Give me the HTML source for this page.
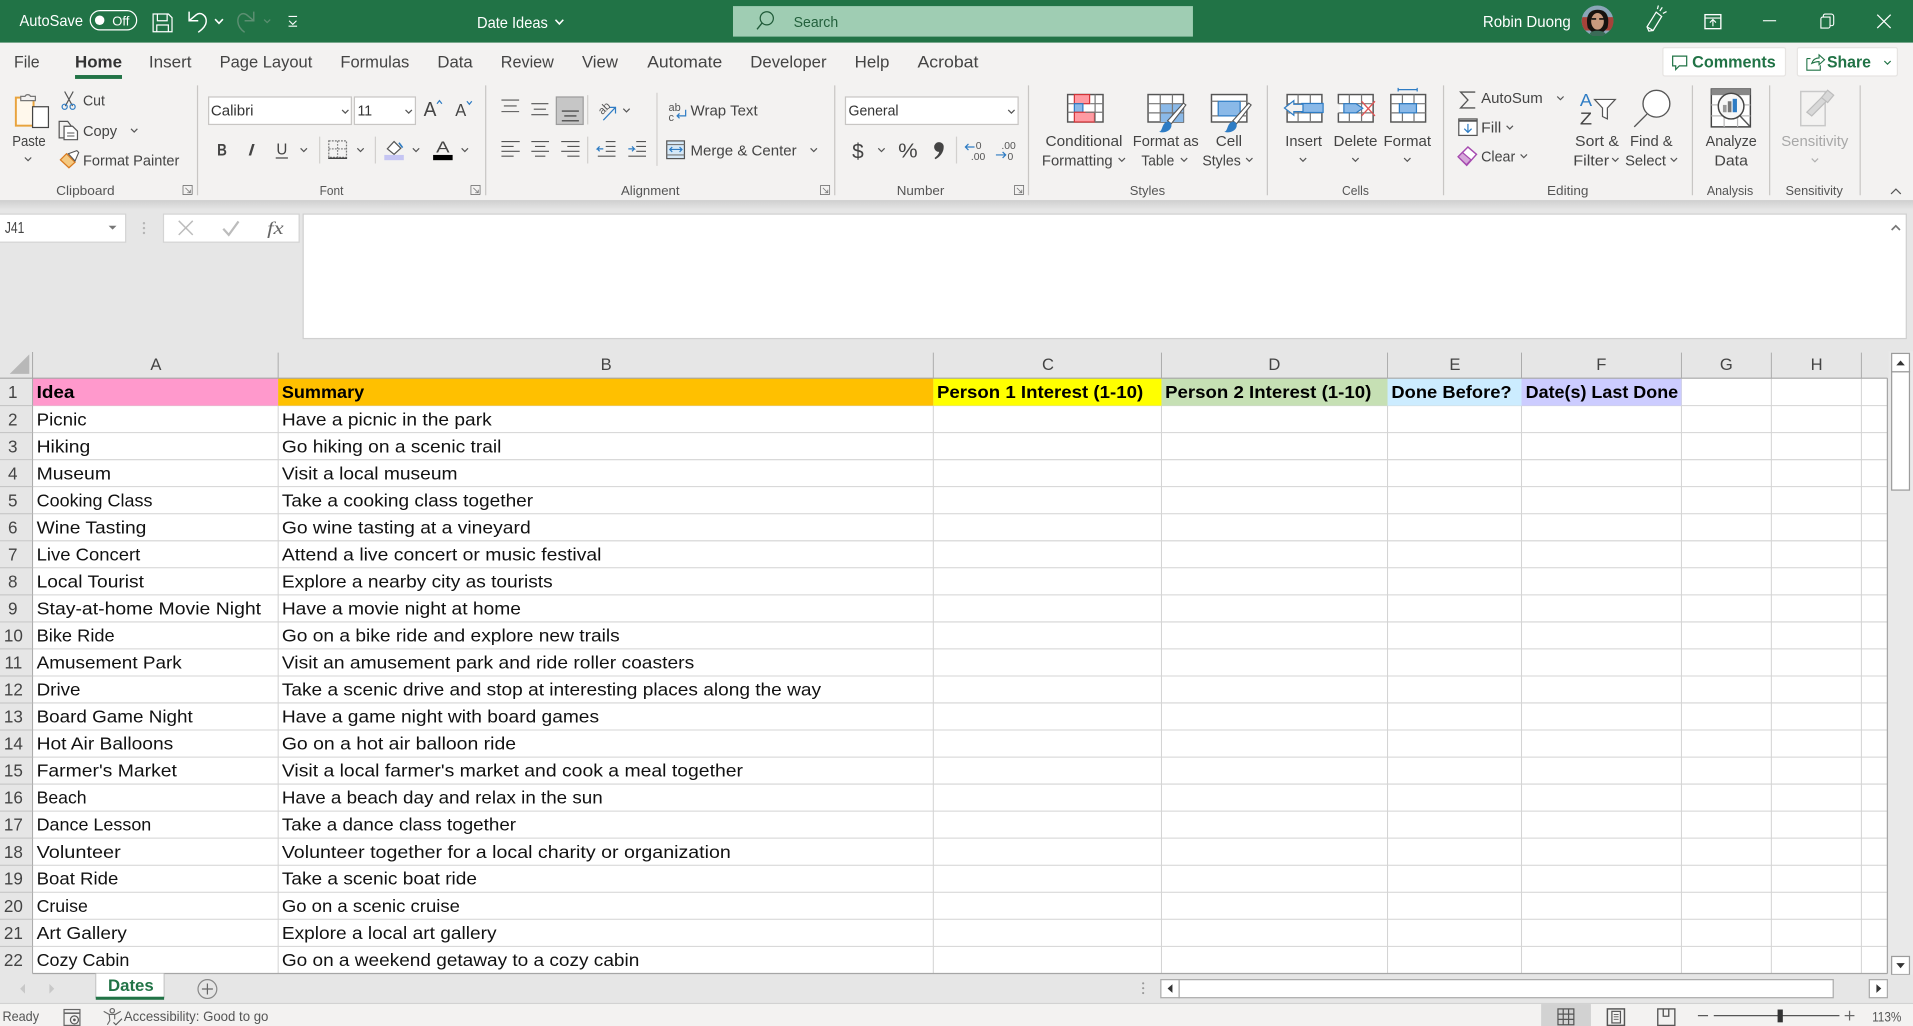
<!DOCTYPE html>
<html lang="en">
<head>
<meta charset="utf-8">
<title>Date Ideas - Excel</title>
<style>
html,body{margin:0;padding:0;background:#e6e6e6;overflow:hidden;width:1913px;height:1026px}
svg{display:block;font-family:"Liberation Sans",sans-serif}
.t{font-size:13.4px;fill:#444;transform:translateY(-.5px)}
.r{font-size:12.2px;fill:#444;transform:translateY(-.5px)}
.g{font-size:10.8px;fill:#555}
.w{font-size:12.6px;fill:#fff}
.c{font-size:14.75px;fill:#111;transform:translateY(-.6px)}
.b{font-size:14.75px;fill:#000;font-weight:700;transform:translateY(-.6px)}
.n{font-size:14px;fill:#444;text-anchor:middle;transform:translateY(-.6px)}
.l{font-size:13.6px;fill:#444;text-anchor:middle;transform:translateY(-.6px)}
.s{font-size:11.4px;fill:#555}
</style>
</head>
<body>
<svg xmlns="http://www.w3.org/2000/svg" width="1913" height="1026" viewBox="0 0 1568 841" preserveAspectRatio="none">
<defs>
<path id="ch" d="M-2.6-1.4L0 1.2L2.6-1.4" fill="none" stroke="#555" stroke-width="1"/>
<path id="chw" d="M-3.2-1.8L0 1.6L3.2-1.8" fill="none" stroke="#fff" stroke-width="1.3"/>
<linearGradient id="sh" x1="0" y1="0" x2="0" y2="1"><stop offset="0" stop-color="#cfcfcf"/><stop offset="1" stop-color="#e6e6e6"/></linearGradient>
<g id="brush"><path d="M2-2L15-16.500L17-15L5 .5Z" fill="#fff" stroke="#555" stroke-width="0.9"/><path d="M-5 7C-2 6.500-3 1 1-1C3-2 6 0 5 3C4 6.500-1 8.500-5 7Z" fill="#2e7cc4"/></g>
</defs>

<rect width="1568" height="841" fill="#e6e6e6"/>

<!-- title bar -->
<rect width="1568" height="35" fill="#217346"/>
<text class="w" x="16" y="21.500" textLength="52" lengthAdjust="spacingAndGlyphs">AutoSave</text>
<rect x="74" y="8.700" width="38" height="15.800" rx="7.900" fill="none" stroke="#fff" stroke-width="1"/>
<circle cx="81.700" cy="16.600" r="3.900" fill="#fff"/>
<text x="92" y="21" font-size="10.500" fill="#fff" textLength="14" lengthAdjust="spacingAndGlyphs">Off</text>
<path d="M125.500 11.500H138L141 14.500V26H125.500ZM129 11.500V17H137V11.500M128.500 26V20.500H138V26" fill="none" stroke="#fff" stroke-width="1"/>
<path d="M155 9.500V17H162.500M155.500 16.500L161 12C165 9.500 169.500 13 169 18C168.800 21 166 24 162.500 26.500" fill="none" stroke="#fff" stroke-width="1.200"/>
<use href="#chw" x="179.500" y="17.500"/>
<path d="M208 9.500V17H200.500M207.500 16.500L202 12C198 9.500 194.500 13 195 18C195.200 21 197 24 200.500 26.500" fill="none" stroke="#5c8f72" stroke-width="1.200"/>
<path d="M216.500 16l2.500 2.500L221.500 16" fill="none" stroke="#5c8f72"/>
<path d="M236.500 13.500h7M237 17l3 3l3-3M236.500 21.500h7" fill="none" stroke="#fff" stroke-width="0.900"/>
<text x="391" y="23" font-size="12.600" fill="#fff" textLength="58" lengthAdjust="spacingAndGlyphs">Date Ideas</text>
<use href="#chw" x="458.500" y="18"/>
<rect x="600.800" y="5" width="377" height="25" fill="#9fcdb3"/>
<circle cx="628.500" cy="15" r="5.400" fill="none" stroke="#1f5a38" stroke-width="1"/>
<path d="M624.500 19L620.500 24" stroke="#1f5a38" stroke-width="1.100"/>
<text x="650.500" y="22" font-size="12.400" fill="#23603c" textLength="36.500" lengthAdjust="spacingAndGlyphs">Search</text>
<text class="w" x="1215.500" y="22" textLength="72" lengthAdjust="spacingAndGlyphs">Robin Duong</text>
<!-- avatar -->
<ellipse cx="1309.400" cy="17" rx="13" ry="12.500" fill="#8ba6b8"/>
<path d="M1296.500 17c0 3 1 6 3 8h20c2-2 3-5 3-8c0-1-.2-2-.5-3h-25c-.3 1-.5 2-.5 3z" fill="#a5433a"/>
<path d="M1301.500 23c-1.500-6-1.500-15 8-15s9.500 9 8 15l-3 3h-10z" fill="#17120f"/>
<ellipse cx="1309.400" cy="17.500" rx="5.200" ry="6.800" fill="#c99a7e"/>
<path d="M1303 27.500c2-3 10-3 13 0l-2 2h-9z" fill="#3b6b58"/>
<path d="M1304.500 15.500h3.800M1310.800 15.500h3.800" stroke="#111" stroke-width="1.300"/>
<!-- pen -->
<path d="M1350 22l1.500 3.500l3.500-.5l7-11.500l-4.500-3.500zM1350 22l5 3M1360.500 9l2-3M1363 11l3-1.500M1358.500 7.500l.8-3" fill="none" stroke="#fff" stroke-width="1"/>
<rect x="1397.500" y="12" width="13" height="11.500" fill="none" stroke="#fff" stroke-width="1.100"/>
<path d="M1397.500 14.800h13M1404 21.500v-5M1401.500 18.500l2.500-2.500l2.500 2.500" fill="none" stroke="#fff" stroke-width="0.900"/>
<path d="M1445 17h10.800" stroke="#fff" stroke-width="0.900"/>
<path d="M1492.500 15.500a1.500 1.500 0 0 1 1.500-1.500h6v7.500a1.500 1.500 0 0 1-1.500 1.500h-6zM1494.500 14v-1a1.500 1.500 0 0 1 1.500-1.500h5a2 2 0 0 1 2 2v6a1.500 1.500 0 0 1-1.500 1.500h-1.500" fill="none" stroke="#fff" stroke-width="0.900"/>
<path d="M1538.700 12l11 11M1549.700 12l-11 11" stroke="#fff" stroke-width="1"/>

<!-- ribbon -->
<rect y="35" width="1568" height="129" fill="#f3f2f1"/>
<rect y="164" width="1568" height="8" fill="url(#sh)"/>
<text class="t" x="11.500" y="56" textLength="21" lengthAdjust="spacingAndGlyphs">File</text>
<text class="t" x="61.500" y="56" textLength="38.500" lengthAdjust="spacingAndGlyphs" style="font-weight:700;fill:#333">Home</text>
<rect x="61.500" y="61.500" width="38.500" height="3.200" fill="#217346"/>
<text class="t" x="122" y="56" textLength="35" lengthAdjust="spacingAndGlyphs">Insert</text>
<text class="t" x="180" y="56" textLength="76" lengthAdjust="spacingAndGlyphs">Page Layout</text>
<text class="t" x="279" y="56" textLength="56.500" lengthAdjust="spacingAndGlyphs">Formulas</text>
<text class="t" x="358.500" y="56" textLength="29" lengthAdjust="spacingAndGlyphs">Data</text>
<text class="t" x="410.500" y="56" textLength="43.500" lengthAdjust="spacingAndGlyphs">Review</text>
<text class="t" x="477" y="56" textLength="29.500" lengthAdjust="spacingAndGlyphs">View</text>
<text class="t" x="530.500" y="56" textLength="61.500" lengthAdjust="spacingAndGlyphs">Automate</text>
<text class="t" x="615" y="56" textLength="62.500" lengthAdjust="spacingAndGlyphs">Developer</text>
<text class="t" x="700.500" y="56" textLength="28.500" lengthAdjust="spacingAndGlyphs">Help</text>
<text class="t" x="752" y="56" textLength="50" lengthAdjust="spacingAndGlyphs">Acrobat</text>

<!-- comments / share -->
<rect x="1363" y="39" width="100.500" height="23.300" rx="1.500" fill="#fff" stroke="#e6e4e2"/>
<path d="M1371 46h11.500v8h-6l-3 3v-3h-2.500z" fill="none" stroke="#217346"/>
<text x="1387" y="55.500" font-size="13.400" font-weight="700" fill="#217346" textLength="68.500" lengthAdjust="spacingAndGlyphs">Comments</text>
<rect x="1473.200" y="39" width="82" height="23.300" rx="1.500" fill="#fff" stroke="#e6e4e2"/>
<path d="M1481 48h3M1481 48v9.500h11v-4M1485 52c1-3 3-4.500 6-4.500v-2.500l4.500 4l-4.500 4v-2.500c-2 0-4 .5-6 1.500z" fill="none" stroke="#217346" stroke-width="0.900"/>
<text x="1497.500" y="55.500" font-size="13.400" font-weight="700" fill="#217346" textLength="36" lengthAdjust="spacingAndGlyphs">Share</text>
<path d="M1544.500 50l2.600 2.600l2.600-2.600" fill="none" stroke="#217346"/>

<!-- separators -->
<path d="M161.900 70v90M398.100 70v90M684.200 70v90M843 70v90M1038.800 70v90M1183.200 70v90M1387.200 70v90M1450.500 70v90M1524.700 70v90" stroke="#c8c6c4"/>
<path d="M262 112v22M307.700 112v22M481.700 112v22M538.500 76v60M784 112v22M481.700 78v24" stroke="#d2d0ce"/>

<!-- group labels -->
<text class="g" x="46" y="160" textLength="48" lengthAdjust="spacingAndGlyphs">Clipboard</text>
<text class="g" x="262" y="160" textLength="19.500" lengthAdjust="spacingAndGlyphs">Font</text>
<text class="g" x="509" y="160" textLength="48" lengthAdjust="spacingAndGlyphs">Alignment</text>
<text class="g" x="735" y="160" textLength="39" lengthAdjust="spacingAndGlyphs">Number</text>
<text class="g" x="926" y="160" textLength="29" lengthAdjust="spacingAndGlyphs">Styles</text>
<text class="g" x="1100" y="160" textLength="22" lengthAdjust="spacingAndGlyphs">Cells</text>
<text class="g" x="1268" y="160" textLength="34" lengthAdjust="spacingAndGlyphs">Editing</text>
<text class="g" x="1399" y="160" textLength="38" lengthAdjust="spacingAndGlyphs">Analysis</text>
<text class="g" x="1463.500" y="160" textLength="47" lengthAdjust="spacingAndGlyphs">Sensitivity</text>
<path d="M150 152h7.500v7.500M150 152v7.500h7.500M152 154l4 4M156 155.500v2.500h-2.500" fill="none" stroke="#777" stroke-width="0.700"/>
<path d="M386 152h7.500v7.500M386 152v7.500h7.500M388 154l4 4M392 155.500v2.500h-2.500" fill="none" stroke="#777" stroke-width="0.700"/>
<path d="M672.500 152h7.500v7.500M672.500 152v7.500h7.500M674.500 154l4 4M678.500 155.500v2.500h-2.500" fill="none" stroke="#777" stroke-width="0.700"/>
<path d="M831.500 152h7.500v7.500M831.500 152v7.500h7.500M833.500 154l4 4M837.500 155.500v2.500h-2.500" fill="none" stroke="#777" stroke-width="0.700"/>
<path d="M1550 159l4-4l4 4" fill="none" stroke="#555" stroke-width="1"/>

<!-- clipboard -->
<rect x="13" y="80" width="14.500" height="23" fill="#fff8ec" stroke="#e8a33d" stroke-width="1.600"/>
<path d="M17 82.500v-3.500h3.500a2.500 2.500 0 0 1 4.500 0H29v3.500z" fill="#f3f2f1" stroke="#777" stroke-width="1"/>
<rect x="26.700" y="87.500" width="13" height="17" fill="#fff" stroke="#444" stroke-width="1"/>
<text class="r" x="10" y="120" textLength="27.500" lengthAdjust="spacingAndGlyphs">Paste</text>
<use href="#ch" x="23" y="130.500"/>
<path d="M53 75l6.500 12M60 75l-6.500 12" stroke="#555" fill="none"/>
<circle cx="53" cy="87.500" r="2.100" fill="none" stroke="#2e7cc4"/><circle cx="59.500" cy="87.500" r="2.100" fill="none" stroke="#2e7cc4"/>
<text class="r" x="68" y="87" textLength="18" lengthAdjust="spacingAndGlyphs">Cut</text>
<path d="M52 113h-3.500V99.500h7l3 4" fill="none" stroke="#555"/>
<path d="M52.500 103.500h7l4 4v7h-11z" fill="#fff" stroke="#555"/>
<path d="M55 109h6M55 111.500h6" stroke="#777"/>
<text class="r" x="68" y="112" textLength="28" lengthAdjust="spacingAndGlyphs">Copy</text>
<use href="#ch" x="110" y="107"/>
<path d="M49.500 131l5-5l7 7l-5 4.500z" fill="#f4c982" stroke="#d97a1f"/>
<path d="M56 126l7-2.500l1.500 1.500l-3 7z" fill="#fff" stroke="#555" stroke-width="0.900"/>
<text class="r" x="68" y="136" textLength="79" lengthAdjust="spacingAndGlyphs">Format Painter</text>

<!-- font -->
<rect x="171" y="79.500" width="117" height="22.500" fill="#fff" stroke="#c8c6c4"/>
<text class="r" x="172.800" y="95" textLength="35" lengthAdjust="spacingAndGlyphs" style="fill:#333">Calibri</text>
<use href="#ch" x="283" y="91.500"/>
<rect x="290.500" y="79.500" width="50" height="22.500" fill="#fff" stroke="#c8c6c4"/>
<text class="r" x="293" y="95" textLength="12" lengthAdjust="spacingAndGlyphs" style="fill:#333">11</text>
<use href="#ch" x="335" y="91.500"/>
<g transform="translate(1.200 0)">
<text x="346" y="95" font-size="16.500" fill="#444" textLength="10.500" lengthAdjust="spacingAndGlyphs">A</text>
<path d="M357 85l2-2.500l2 2.500" fill="none" stroke="#2e7cc4"/>
<text x="372" y="95" font-size="14" fill="#444" textLength="9" lengthAdjust="spacingAndGlyphs">A</text>
<path d="M381.500 83l2 2.500l2-2.500" fill="none" stroke="#2e7cc4"/>
</g>
<g transform="translate(1 0)">
<text x="177" y="127.500" font-size="13.500" font-weight="700" fill="#444" textLength="8" lengthAdjust="spacingAndGlyphs">B</text>
<text x="202" y="127.500" font-size="13.500" font-style="italic" fill="#444" textLength="6" lengthAdjust="spacingAndGlyphs">I</text>
<text x="225.500" y="126.500" font-size="13" fill="#444" textLength="9" lengthAdjust="spacingAndGlyphs">U</text>
<path d="M225 129.500h10" stroke="#444"/>
<use href="#ch" x="248" y="123"/>
<rect x="268.500" y="115.500" width="14.500" height="13.500" fill="none" stroke="#777" stroke-dasharray="1.500 1"/>
<path d="M275.700 115.500v13.500M268.500 122h14.500" stroke="#888" stroke-dasharray="1.500 1"/>
<path d="M268 129.700h15.500" stroke="#444" stroke-width="1.200"/>
<use href="#ch" x="294.500" y="123"/>
<path d="M316.500 122l5.500-6l5.500 5.500l-5.500 5z" fill="#fff" stroke="#555"/>
<path d="M326 117l3 4" stroke="#2e7cc4" stroke-width="1.300"/>
<rect x="314" y="127" width="16" height="4.300" fill="#c5c5f3"/>
<use href="#ch" x="340" y="123"/>
<text x="356.500" y="125" font-size="13" fill="#444" textLength="11" lengthAdjust="spacingAndGlyphs">A</text>
<rect x="354" y="127" width="16" height="4.300" fill="#000"/>
<use href="#ch" x="380" y="123"/>
</g>

<!-- alignment -->
<g transform="translate(1.500 0)">
<path d="M409.500 82h14.500M411.500 86.800h10.500M409.500 91.500h14.500" stroke="#555" stroke-width="0.900"/>
<path d="M434 85h14M436 89.500h10M434 94h14" stroke="#555" stroke-width="0.900"/>
<rect x="454.500" y="79.500" width="22" height="22.500" fill="#c6c6c6" stroke="#9c9c9c"/>
<path d="M459 91h14M461 95h10M459 99h14" stroke="#333" stroke-width="0.900"/>
<path d="M493 98.500l10-10.500M503 93v-5h-5" fill="none" stroke="#2e7cc4"/>
<text x="488" y="92" font-size="9" fill="#555" transform="rotate(-45 493 88)">ab</text>
<use href="#ch" x="512" y="90.500"/>
<path d="M409.500 116h15M409.500 120h10M409.500 124h15M409.500 128h10" stroke="#555" stroke-width="0.900"/>
<path d="M434 116h14.500M437 120h8.500M434 124h14.500M437 128h8.500" stroke="#555" stroke-width="0.900"/>
<path d="M458.500 116h15M463.500 120h10M458.500 124h15M463.500 128h10" stroke="#555" stroke-width="0.900"/>
<path d="M495 116h8M495 120h8M495 124h8M488.500 128h14.500" stroke="#555" stroke-width="0.900"/>
<path d="M493 122h-5l2-2m-2 2l2 2" stroke="#2e7cc4" fill="none"/>
<path d="M520 116h8M520 120h8M520 124h8M513.500 128h14.500" stroke="#555" stroke-width="0.900"/>
<path d="M513.500 122h5l-2-2m2 2l-2 2" stroke="#2e7cc4" fill="none"/>
</g>
<text x="548" y="91" font-size="9" fill="#555">ab</text>
<text x="548" y="99" font-size="9" fill="#555">c</text>
<path d="M562 90v5h-7m2-2l-2 2l2 2" fill="none" stroke="#2e7cc4"/>
<text class="r" x="566" y="95" textLength="55" lengthAdjust="spacingAndGlyphs">Wrap Text</text>
<rect x="546.500" y="115.500" width="14.500" height="14.500" fill="#d5e8f7" stroke="#555"/>
<path d="M549 122.500h10M551 120.500l-2 2l2 2M557 120.500l2 2l-2 2" fill="none" stroke="#2e7cc4"/>
<path d="M546.500 118.500h14.500M546.500 127h14.500" stroke="#777"/>
<text class="r" x="566" y="128" textLength="87" lengthAdjust="spacingAndGlyphs">Merge &amp; Center</text>
<use href="#ch" x="667" y="123"/>

<!-- number -->
<rect x="693" y="79.500" width="141.500" height="22.500" fill="#fff" stroke="#c8c6c4"/>
<text class="r" x="695.500" y="95" textLength="41" lengthAdjust="spacingAndGlyphs" style="fill:#333">General</text>
<use href="#ch" x="829" y="91.500"/>
<text x="698.500" y="130" font-size="17.500" fill="#444" textLength="9.500" lengthAdjust="spacingAndGlyphs">$</text>
<use href="#ch" x="722.500" y="123"/>
<text x="736.200" y="129" font-size="17" fill="#444" textLength="16" lengthAdjust="spacingAndGlyphs">%</text>
<path d="M769.500 116.500a3.800 3.800 0 0 1 4 4.200c0 4-3 8-6.800 9.800l-.7-1c2-1.500 3.500-3.200 3.800-5a3.800 3.800 0 0 1-.3-8z" fill="#444"/>
<g transform="translate(.8 0)">
<text x="799" y="122" font-size="8.500" fill="#555">0</text>
<text x="795" y="131" font-size="8.500" fill="#555">.00</text>
<path d="M798 120.500h-7.500m2.500-2.500l-2.500 2.500l2.500 2.500" fill="none" stroke="#2e7cc4"/>
<text x="820" y="122" font-size="8.500" fill="#555">.00</text>
<text x="825" y="131" font-size="8.500" fill="#555">0</text>
<path d="M815.500 127h8m-2.500-2.500l2.500 2.500l-2.500 2.500" fill="none" stroke="#2e7cc4"/>
</g>

<!-- styles -->
<g fill="none" transform="translate(.6 0)">
<rect x="874.500" y="77.500" width="29" height="22.500" fill="#fff" stroke="#555" stroke-width="1.200"/>
<rect x="880" y="77.500" width="12.500" height="7.500" fill="#ff9aa2" stroke="#d13438"/>
<rect x="880" y="85" width="7" height="7" fill="#8ab9e8" stroke="#2e7cc4"/>
<rect x="880" y="92" width="16.500" height="8" fill="#ff9aa2" stroke="#d13438"/>
<path d="M874.500 85h5M874.500 92h5M893 85h10.500M889 92h14.500M897 77.500v22.500" stroke="#777"/>
</g>
<g fill="none" transform="translate(1 0)">
<rect x="940" y="77.500" width="29" height="22.500" fill="#fff" stroke="#555" stroke-width="1.200"/>
<rect x="950" y="85" width="19" height="15" fill="#8ab9e8"/>
<path d="M940 85h29M940 92.500h29M950 77.500v22.500M960 77.500v22.500" stroke="#777"/>
</g>
<use href="#brush" x="955" y="101"/>
<g fill="none" transform="translate(1.500 0)">
<rect x="991.500" y="77.500" width="29" height="22.500" fill="#fff" stroke="#555" stroke-width="1.200"/>
<rect x="997" y="83" width="18" height="12" fill="#8ab9e8" stroke="#2e7cc4"/>
<path d="M991.500 83h5.500M991.500 95h5.500M1015 83h5.500M1015 95h5.500" stroke="#777"/>
</g>
<use href="#brush" x="1008.500" y="101"/>
<text class="r" x="857" y="120" textLength="63" lengthAdjust="spacingAndGlyphs">Conditional</text>
<text class="r" x="854" y="136" textLength="58" lengthAdjust="spacingAndGlyphs">Formatting</text>
<use href="#ch" x="919.500" y="131"/>
<text class="r" x="928.500" y="120" textLength="54" lengthAdjust="spacingAndGlyphs">Format as</text>
<text class="r" x="935.500" y="136" textLength="27" lengthAdjust="spacingAndGlyphs">Table</text>
<use href="#ch" x="970.500" y="131"/>
<text class="r" x="996.500" y="120" textLength="21.500" lengthAdjust="spacingAndGlyphs">Cell</text>
<text class="r" x="985.500" y="136" textLength="31.500" lengthAdjust="spacingAndGlyphs">Styles</text>
<use href="#ch" x="1024" y="131"/>

<!-- cells -->
<g>
<rect x="1055" y="77.500" width="28.500" height="22.500" fill="#fff" stroke="#555" stroke-width="1.200"/>
<path d="M1055 85h28.500M1055 92.500h28.500M1064 77.500v22.500M1074 77.500v22.500" stroke="#777"/>
<rect x="1067" y="84.800" width="17.500" height="7.400" fill="#8ab9e8" stroke="#2e7cc4"/>
<path d="M1052.800 88.500L1060.500 82.500V85.500H1068V91.500H1060.500V94.500Z" fill="#f3f2f1" stroke="#2e7cc4"/>
</g>
<g>
<rect x="1097" y="77.500" width="28.500" height="22.500" fill="#fff" stroke="#555" stroke-width="1.200"/>
<path d="M1097 85v7.500" stroke="#f3f2f1" stroke-width="2"/>
<path d="M1097 85h28M1097 92.500h28M1106 77.500v22.500M1116 77.500v22.500" stroke="#777"/>
<path d="M1101.500 85H1111.500L1117 88.700L1111.500 92.500H1101.500Z" fill="#8ab9e8" stroke="#2e7cc4"/>
<path d="M1116 83l11 12M1127 83l-11 12" stroke="#e05555" stroke-width="1.100"/>
</g>
<g>
<rect x="1140" y="77.500" width="28.500" height="22.500" fill="#fff" stroke="#555" stroke-width="1.200"/>
<path d="M1140 85h28.500M1140 92.500h28.500M1149.500 77.500v22.500M1159 77.500v22.500" stroke="#777"/>
<rect x="1147" y="85" width="14" height="7.500" fill="#8ab9e8" stroke="#2e7cc4"/>
<path d="M1146 73.500h15.600M1146 72v3M1161.600 72v3" stroke="#2e7cc4" fill="none"/>
</g>
<text class="r" x="1053.500" y="120" textLength="30" lengthAdjust="spacingAndGlyphs">Insert</text>
<use href="#ch" x="1068" y="131"/>
<text class="r" x="1093" y="120" textLength="36" lengthAdjust="spacingAndGlyphs">Delete</text>
<use href="#ch" x="1111" y="131"/>
<text class="r" x="1134" y="120" textLength="39" lengthAdjust="spacingAndGlyphs">Format</text>
<use href="#ch" x="1153.500" y="131"/>

<!-- editing -->
<g transform="translate(.7 0)">
<path d="M1208.500 75.500h-12l6 6.500l-6 6.500h12" fill="none" stroke="#555" stroke-width="1.100"/>
<rect x="1195" y="97.500" width="15" height="13.500" fill="#fff" stroke="#555"/>
<path d="M1195 99h15" stroke="#555" stroke-width="1.500"/>
<path d="M1202.500 101.500v7m-3-3l3 3l3-3" fill="none" stroke="#2e7cc4"/>
<path d="M1194.500 128.500l8-8l7 6l-8 9z" fill="#fff" stroke="#a64bb0" stroke-width="1.200"/>
<path d="M1198 125l7 6l-3.700 4l-6.800-6.500z" fill="#d6a8da" stroke="#a64bb0"/>
</g>
<text class="r" x="1214" y="85" textLength="50.500" lengthAdjust="spacingAndGlyphs">AutoSum</text>
<use href="#ch" x="1279" y="80.500"/>
<text class="r" x="1214" y="109" textLength="16.500" lengthAdjust="spacingAndGlyphs">Fill</text>
<use href="#ch" x="1237.500" y="104.500"/>
<text class="r" x="1214" y="133" textLength="28" lengthAdjust="spacingAndGlyphs">Clear</text>
<use href="#ch" x="1249" y="128"/>
<g transform="translate(1 0)">
<text x="1294" y="87" font-size="14" fill="#2e7cc4" textLength="10" lengthAdjust="spacingAndGlyphs">A</text>
<text x="1294" y="102" font-size="14" fill="#444" textLength="10" lengthAdjust="spacingAndGlyphs">Z</text>
<path d="M1306 81.500h17l-6.500 7v9l-4-2v-7z" fill="#fff" stroke="#555"/>
<circle cx="1356.700" cy="85" r="11" fill="#fff" stroke="#555" stroke-width="1.100"/>
<path d="M1349 93.500L1338.500 104" stroke="#555" stroke-width="1.100"/>
</g>
<text class="r" x="1291" y="120" textLength="36" lengthAdjust="spacingAndGlyphs">Sort &amp;</text>
<text class="r" x="1289.500" y="136" textLength="29.500" lengthAdjust="spacingAndGlyphs">Filter</text>
<use href="#ch" x="1324" y="131"/>
<text class="r" x="1336" y="120" textLength="35" lengthAdjust="spacingAndGlyphs">Find &amp;</text>
<text class="r" x="1332" y="136" textLength="33.500" lengthAdjust="spacingAndGlyphs">Select</text>
<use href="#ch" x="1372" y="131"/>

<!-- analyze -->
<g transform="translate(1.200 0)">
<rect x="1401.500" y="73" width="32" height="31" fill="#fff" stroke="#444" stroke-width="1.200"/>
<rect x="1401.500" y="73" width="32" height="5" fill="#888"/>
<path d="M1401.500 86h32M1401.500 95h32M1412 78v26M1423 78v26" stroke="#bbb"/>
<circle cx="1417.700" cy="87" r="10.500" fill="#f7f7f7" stroke="#444" stroke-width="1.200"/>
<path d="M1425 95l8.500 9" stroke="#555" stroke-width="1.200"/>
<rect x="1411" y="86" width="3" height="6" fill="#999"/><rect x="1415" y="83" width="3" height="9" fill="#777"/><rect x="1419" y="81" width="3.500" height="11" fill="#2e7cc4"/>
</g>
<text class="r" x="1398" y="120" textLength="42" lengthAdjust="spacingAndGlyphs">Analyze</text>
<text class="r" x="1405.200" y="136" textLength="27.500" lengthAdjust="spacingAndGlyphs">Data</text>

<!-- sensitivity -->
<g transform="translate(1 0)">
<rect x="1475" y="75" width="20" height="28" fill="#f3f2f1" stroke="#c8c8c8" stroke-width="1.200"/>
<path d="M1480 92l13-13l4 3l-13 13z" fill="#d8d8d8" stroke="#bdbdbd"/>
<path d="M1492 80l5-6l5 4l-5 6z" fill="#d8d8d8" stroke="#bdbdbd"/>
</g>
<text class="r" x="1460" y="120" textLength="55" lengthAdjust="spacingAndGlyphs" style="fill:#a8a8a8">Sensitivity</text>
<path d="M1485 130l2.600 2.600l2.600-2.600" fill="none" stroke="#b0b0b0"/>

<!-- formula bar -->
<rect x="-1" y="175.500" width="104" height="23" fill="#fff" stroke="#d4d4d4"/>
<text x="4" y="191" textLength="16" lengthAdjust="spacingAndGlyphs" style="fill:#444;font-size:12.800px">J41</text>
<path d="M89 185h6.500l-3.200 3.200z" fill="#777"/>
<circle cx="118" cy="183" r="1" fill="#b5b5b5"/><circle cx="118" cy="187" r="1" fill="#b5b5b5"/><circle cx="118" cy="191" r="1" fill="#b5b5b5"/>
<rect x="134" y="175.500" width="111.200" height="23" fill="#fff" stroke="#d4d4d4"/>
<path d="M146.500 181l11.500 11.500M158 181l-11.500 11.500" stroke="#bcbcbc" stroke-width="1.200"/>
<path d="M183 187.500l4.500 5l8-11" fill="none" stroke="#bcbcbc" stroke-width="1.800"/>
<text x="219" y="192" font-family="Liberation Serif,serif" font-style="italic" font-size="15" fill="#666" textLength="13.500" lengthAdjust="spacingAndGlyphs">fx</text>
<rect x="248.500" y="175.500" width="1314" height="102" fill="#fff" stroke="#d0d0d0"/>
<path d="M1550.500 188.500l3.400-3.400l3.400 3.400" fill="none" stroke="#777" stroke-width="1.400"/>

<!-- grid body -->
<rect x="26.700" y="310" width="1520.300" height="488" fill="#fff"/>
<path d="M8 306.500L24 290.500V306.500Z" fill="#b8b8b8"/>
<g stroke="#d4d4d4" stroke-width="0.850">
<path d="M26.700 354.600H1547M26.700 376.800H1547M26.700 398.900H1547M26.700 421.100H1547M26.700 443.300H1547M26.700 465.400H1547M26.700 487.600H1547M26.700 509.800H1547M26.700 531.900H1547M26.700 554.100H1547M26.700 576.200H1547M26.700 598.400H1547M26.700 620.600H1547M26.700 642.700H1547M26.700 664.900H1547M26.700 687H1547M26.700 709.200H1547M26.700 731.400H1547M26.700 753.500H1547M26.700 775.700H1547M26.700 332.500H1547"/>
<path d="M228 310V798M765 310V798M952 310V798M1137.300 310V798M1247.100 310V798M1378.200 310V798M1451.900 310V798M1525.700 310V798"/>
</g>
<rect x="26.700" y="310" width="201.300" height="22.500" fill="#ff99cc"/>
<rect x="228" y="310" width="537" height="22.500" fill="#ffc000"/>
<rect x="765" y="310" width="187" height="22.500" fill="#ffff00"/>
<rect x="952" y="310" width="185.300" height="22.500" fill="#c6e0b4"/>
<rect x="1137.300" y="310" width="109.800" height="22.500" fill="#ccecff"/>
<rect x="1247.100" y="310" width="131.100" height="22.500" fill="#ccccff"/>
<path d="M0 310H1547M1547 310V798M26.700 798H1547" stroke="#a6a6a6" stroke-width="1" fill="none"/>
<path d="M26.700 288.500V798" stroke="#a6a6a6" stroke-width="0.800"/>
<path d="M228 289V310M765 289V310M952 289V310M1137.300 289V310M1247.100 289V310M1378.200 289V310M1451.900 289V310M1525.700 289V310" stroke="#ababab" stroke-width="0.800"/>
<g stroke="#c2c2c2" stroke-width="0.800"><path d="M0 332.500H26.700M0 354.600H26.700M0 376.800H26.700M0 398.900H26.700M0 421.100H26.700M0 443.300H26.700M0 465.400H26.700M0 487.600H26.700M0 509.800H26.700M0 531.900H26.700M0 554.100H26.700M0 576.200H26.700M0 598.400H26.700M0 620.600H26.700M0 642.700H26.700M0 664.900H26.700M0 687H26.700M0 709.200H26.700M0 731.400H26.700M0 753.500H26.700M0 775.700H26.700"/></g>

<!-- column letters -->
<text class="l" x="127.800" y="304">A</text><text class="l" x="496.800" y="304">B</text><text class="l" x="859" y="304">C</text><text class="l" x="1044.500" y="304">D</text><text class="l" x="1192.500" y="304">E</text><text class="l" x="1312.500" y="304">F</text><text class="l" x="1415" y="304">G</text><text class="l" x="1489" y="304">H</text>

<!-- row numbers -->
<text class="n" x="10.500" y="327">1</text><text class="n" x="10.500" y="349.200">2</text><text class="n" x="10.500" y="371.400">3</text><text class="n" x="10.500" y="393.500">4</text><text class="n" x="10.500" y="415.700">5</text><text class="n" x="10.500" y="437.800">6</text><text class="n" x="10.500" y="460">7</text><text class="n" x="10.500" y="482.100">8</text><text class="n" x="10.500" y="504.300">9</text><text class="n" x="11" y="526.500">10</text><text class="n" x="11" y="548.600">11</text><text class="n" x="11" y="570.800">12</text><text class="n" x="11" y="592.900">13</text><text class="n" x="11" y="615.100">14</text><text class="n" x="11" y="637.200">15</text><text class="n" x="11" y="659.400">16</text><text class="n" x="11" y="681.500">17</text><text class="n" x="11" y="703.700">18</text><text class="n" x="11" y="725.800">19</text><text class="n" x="11" y="748">20</text><text class="n" x="11" y="770.200">21</text><text class="n" x="11" y="792.300">22</text>

<!-- header row -->
<text class="b" x="30" y="327" textLength="31" lengthAdjust="spacingAndGlyphs">Idea</text>
<text class="b" x="231" y="327" textLength="67.500" lengthAdjust="spacingAndGlyphs">Summary</text>
<text class="b" x="768" y="327" textLength="169" lengthAdjust="spacingAndGlyphs">Person 1 Interest (1-10)</text>
<text class="b" x="955" y="327" textLength="169" lengthAdjust="spacingAndGlyphs">Person 2 Interest (1-10)</text>
<text class="b" x="1140.500" y="327" textLength="98.500" lengthAdjust="spacingAndGlyphs">Done Before?</text>
<text class="b" x="1250.500" y="327" textLength="125" lengthAdjust="spacingAndGlyphs">Date(s) Last Done</text>

<!-- column A -->
<text class="c" x="30" y="349.200" textLength="41" lengthAdjust="spacingAndGlyphs">Picnic</text>
<text class="c" x="30" y="371.400" textLength="44" lengthAdjust="spacingAndGlyphs">Hiking</text>
<text class="c" x="30" y="393.500" textLength="61" lengthAdjust="spacingAndGlyphs">Museum</text>
<text class="c" x="30" y="415.700" textLength="95" lengthAdjust="spacingAndGlyphs">Cooking Class</text>
<text class="c" x="30" y="437.800" textLength="90" lengthAdjust="spacingAndGlyphs">Wine Tasting</text>
<text class="c" x="30" y="460" textLength="85" lengthAdjust="spacingAndGlyphs">Live Concert</text>
<text class="c" x="30" y="482.100" textLength="88" lengthAdjust="spacingAndGlyphs">Local Tourist</text>
<text class="c" x="30" y="504.300" textLength="184" lengthAdjust="spacingAndGlyphs">Stay-at-home Movie Night</text>
<text class="c" x="30" y="526.500" textLength="64" lengthAdjust="spacingAndGlyphs">Bike Ride</text>
<text class="c" x="30" y="548.600" textLength="119" lengthAdjust="spacingAndGlyphs">Amusement Park</text>
<text class="c" x="30" y="570.800" textLength="36" lengthAdjust="spacingAndGlyphs">Drive</text>
<text class="c" x="30" y="592.900" textLength="128" lengthAdjust="spacingAndGlyphs">Board Game Night</text>
<text class="c" x="30" y="615.100" textLength="112" lengthAdjust="spacingAndGlyphs">Hot Air Balloons</text>
<text class="c" x="30" y="637.200" textLength="115" lengthAdjust="spacingAndGlyphs">Farmer's Market</text>
<text class="c" x="30" y="659.400" textLength="41" lengthAdjust="spacingAndGlyphs">Beach</text>
<text class="c" x="30" y="681.500" textLength="94" lengthAdjust="spacingAndGlyphs">Dance Lesson</text>
<text class="c" x="30" y="703.700" textLength="69" lengthAdjust="spacingAndGlyphs">Volunteer</text>
<text class="c" x="30" y="725.800" textLength="67" lengthAdjust="spacingAndGlyphs">Boat Ride</text>
<text class="c" x="30" y="748" textLength="42" lengthAdjust="spacingAndGlyphs">Cruise</text>
<text class="c" x="30" y="770.200" textLength="74" lengthAdjust="spacingAndGlyphs">Art Gallery</text>
<text class="c" x="30" y="792.300" textLength="76" lengthAdjust="spacingAndGlyphs">Cozy Cabin</text>

<!-- column B -->
<text class="c" x="231" y="349.200" textLength="172" lengthAdjust="spacingAndGlyphs">Have a picnic in the park</text>
<text class="c" x="231" y="371.400" textLength="180" lengthAdjust="spacingAndGlyphs">Go hiking on a scenic trail</text>
<text class="c" x="231" y="393.500" textLength="144" lengthAdjust="spacingAndGlyphs">Visit a local museum</text>
<text class="c" x="231" y="415.700" textLength="206" lengthAdjust="spacingAndGlyphs">Take a cooking class together</text>
<text class="c" x="231" y="437.800" textLength="204" lengthAdjust="spacingAndGlyphs">Go wine tasting at a vineyard</text>
<text class="c" x="231" y="460" textLength="262" lengthAdjust="spacingAndGlyphs">Attend a live concert or music festival</text>
<text class="c" x="231" y="482.100" textLength="222" lengthAdjust="spacingAndGlyphs">Explore a nearby city as tourists</text>
<text class="c" x="231" y="504.300" textLength="196" lengthAdjust="spacingAndGlyphs">Have a movie night at home</text>
<text class="c" x="231" y="526.500" textLength="277" lengthAdjust="spacingAndGlyphs">Go on a bike ride and explore new trails</text>
<text class="c" x="231" y="548.600" textLength="338" lengthAdjust="spacingAndGlyphs">Visit an amusement park and ride roller coasters</text>
<text class="c" x="231" y="570.800" textLength="442" lengthAdjust="spacingAndGlyphs">Take a scenic drive and stop at interesting places along the way</text>
<text class="c" x="231" y="592.900" textLength="260" lengthAdjust="spacingAndGlyphs">Have a game night with board games</text>
<text class="c" x="231" y="615.100" textLength="192" lengthAdjust="spacingAndGlyphs">Go on a hot air balloon ride</text>
<text class="c" x="231" y="637.200" textLength="378" lengthAdjust="spacingAndGlyphs">Visit a local farmer's market and cook a meal together</text>
<text class="c" x="231" y="659.400" textLength="263" lengthAdjust="spacingAndGlyphs">Have a beach day and relax in the sun</text>
<text class="c" x="231" y="681.500" textLength="192" lengthAdjust="spacingAndGlyphs">Take a dance class together</text>
<text class="c" x="231" y="703.700" textLength="368" lengthAdjust="spacingAndGlyphs">Volunteer together for a local charity or organization</text>
<text class="c" x="231" y="725.800" textLength="160" lengthAdjust="spacingAndGlyphs">Take a scenic boat ride</text>
<text class="c" x="231" y="748" textLength="146" lengthAdjust="spacingAndGlyphs">Go on a scenic cruise</text>
<text class="c" x="231" y="770.200" textLength="176" lengthAdjust="spacingAndGlyphs">Explore a local art gallery</text>
<text class="c" x="231" y="792.300" textLength="293" lengthAdjust="spacingAndGlyphs">Go on a weekend getaway to a cozy cabin</text>

<!-- vertical scrollbar -->
<rect x="1548" y="288" width="20" height="512" fill="#e9e9e9"/>
<rect x="1550.500" y="304.700" width="14.600" height="97" fill="#fff" stroke="#9c9c9c"/>
<rect x="1550.500" y="289.700" width="14.600" height="15" fill="#fff" stroke="#9c9c9c"/>
<path d="M1554.300 299.500h7l-3.500-4z" fill="#333"/>
<rect x="1550.500" y="784" width="14.600" height="14.800" fill="#fff" stroke="#9c9c9c"/>
<path d="M1554.300 789.500h7l-3.500 4.200z" fill="#333"/>

<!-- sheet tabs -->
<rect y="799" width="1568" height="23.500" fill="#e6e6e6"/>
<path d="M0 822.500H1568" stroke="#d2d2d2"/>
<path d="M20.500 806.500l-4 4l4 4z" fill="#c8c8c8"/><path d="M40.500 806.500l4 4l-4 4z" fill="#c8c8c8"/>
<rect x="78.500" y="798" width="56" height="20" fill="#fff"/>
<path d="M78.500 798v20M134.500 798v20" stroke="#c0c0c0" stroke-width="0.800"/>
<rect x="78.500" y="817" width="56" height="2.500" fill="#217346"/>
<text x="88.500" y="812.500" font-size="13.500" font-weight="700" fill="#217346" textLength="37.500" lengthAdjust="spacingAndGlyphs">Dates</text>
<circle cx="170" cy="810.700" r="7.700" fill="none" stroke="#888"/>
<path d="M165.500 810.700h9M170 806.200v9" stroke="#666"/>
<circle cx="937" cy="806" r="0.900" fill="#999"/><circle cx="937" cy="810" r="0.900" fill="#999"/><circle cx="937" cy="814" r="0.900" fill="#999"/>
<rect x="951.500" y="803" width="15" height="14.800" fill="#fff" stroke="#ababab"/>
<path d="M961 806.800v7l-4-3.500z" fill="#333"/>
<rect x="966.500" y="803" width="536.100" height="14.800" fill="#fff" stroke="#ababab"/>
<rect x="1532.200" y="803" width="14.800" height="14.800" fill="#fff" stroke="#ababab"/>
<path d="M1538 806.800v7l4-3.500z" fill="#333"/>

<!-- status bar -->
<rect y="823" width="1568" height="18" fill="#f3f2f1"/>
<text class="s" x="2" y="837" textLength="30" lengthAdjust="spacingAndGlyphs">Ready</text>
<rect x="52.500" y="827.500" width="13" height="13" fill="none" stroke="#666"/>
<path d="M52.500 830.500h13" stroke="#666" stroke-width="1.300"/>
<circle cx="61" cy="836" r="3.300" fill="#f3f2f1" stroke="#555"/><circle cx="61" cy="836" r="1.100" fill="#555"/>
<circle cx="92" cy="828.500" r="1.800" fill="none" stroke="#666"/>
<path d="M85 829l4.500 2.500h5l4.500-2.500M89.500 831.500l.5 5l-2 3.500M94 831.500v4" fill="none" stroke="#666" stroke-width="0.900"/>
<path d="M93 838l2 2l5-5" fill="none" stroke="#555" stroke-width="0.900"/>
<text class="s" x="101.500" y="837" textLength="118.500" lengthAdjust="spacingAndGlyphs">Accessibility: Good to go</text>
<rect x="1263.200" y="823" width="40.800" height="18" fill="#d2d2d2"/>
<g fill="none" stroke="#555" stroke-width="1"><rect x="1277" y="827" width="13" height="13"/><path d="M1277 831.300h13M1277 835.600h13M1281.300 827v13M1285.700 827v13"/></g>
<g fill="none" stroke="#555" stroke-width="1"><rect x="1317.500" y="827" width="14" height="13.500" stroke-width="1.200"/><rect x="1321.200" y="829" width="7" height="9.500"/><path d="M1322.700 831.500h4M1322.700 833.500h4M1322.700 835.500h4" stroke-width="0.700"/></g>
<g fill="none" stroke="#555" stroke-width="1.100"><rect x="1358.800" y="827" width="14" height="13.500"/><path d="M1363.300 827v6h4.500v-6"/></g>
<path d="M1391.700 832.500h8.300" stroke="#555"/>
<path d="M1404.700 832.500h103" stroke="#555"/>
<rect x="1457" y="827.500" width="4.300" height="10.500" fill="#333"/>
<path d="M1512 832.500h8M1516 828.500v8" stroke="#666"/>
<text class="s" x="1534.500" y="837.500" textLength="24" lengthAdjust="spacingAndGlyphs">113%</text>
</svg>
</body>
</html>
